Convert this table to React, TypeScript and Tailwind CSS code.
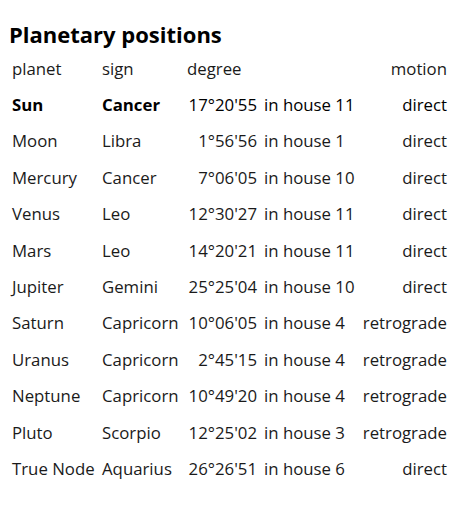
const rows = [
  ["Sun", "Cancer", "17°20'55", "in house 11", "direct"],
  ["Moon", "Libra", "1°56'56", "in house 1", "direct"],
  ["Mercury", "Cancer", "7°06'05", "in house 10", "direct"],
  ["Venus", "Leo", "12°30'27", "in house 11", "direct"],
  ["Mars", "Leo", "14°20'21", "in house 11", "direct"],
  ["Jupiter", "Gemini", "25°25'04", "in house 10", "direct"],
  ["Saturn", "Capricorn", "10°06'05", "in house 4", "retrograde"],
  ["Uranus", "Capricorn", "2°45'15", "in house 4", "retrograde"],
  ["Neptune", "Capricorn", "10°49'20", "in house 4", "retrograde"],
  ["Pluto", "Scorpio", "12°25'02", "in house 3", "retrograde"],
  ["True Node", "Aquarius", "26°26'51", "in house 6", "direct"],
]

export default function App() {
  return (
    <div
      className="h-[509px] w-[474px] bg-white text-[#1a1a1a]"
      style={{fontFamily: '"Open Sans", sans-serif'}}
    >
      <h1 className="pl-[9px] pt-[18px] text-[22px] leading-[32px] font-bold text-black">
        Planetary positions
      </h1>
      <div className="pl-[12px] text-[16.8px]">
        <div className="flex h-[36.4px] items-center">
          <div className="w-[90px]">planet</div>
          <div className="w-[85px]">sign</div>
          <div className="w-[70px]">degree</div>
          <div className="ml-[7px] w-[94px]"></div>
          <div className="w-[89px] text-right">motion</div>
        </div>
        {rows.map((r, i) => (
          <div
            key={r[0]}
            className={`flex h-[36.4px] items-center ${i === 0 ? "font-bold text-black" : ""}`}
          >
            <div className="w-[90px]">{r[0]}</div>
            <div className="w-[85px]">{r[1]}</div>
            <div className="w-[70px] text-right font-normal">{r[2]}</div>
            <div className="ml-[7px] w-[94px] font-normal">{r[3]}</div>
            <div className="w-[89px] text-right font-normal">{r[4]}</div>
          </div>
        ))}
      </div>
    </div>
  )
}
